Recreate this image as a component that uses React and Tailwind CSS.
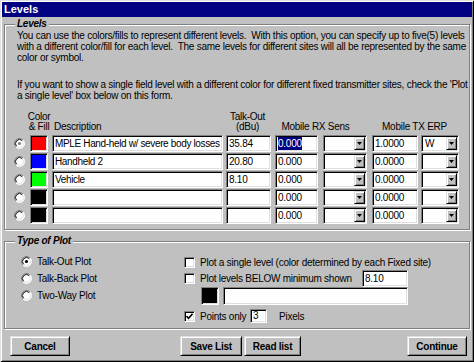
import React from "react"

const FONT = "font-['Liberation_Sans',Arial,sans-serif]"
const SUNK = "border border-t-[#808080] border-l-[#808080] border-r-white border-b-white shadow-[inset_1px_1px_0_#000,inset_-1px_-1px_0_#dfdfdf]"
const RAISED = "border border-t-[#dfdfdf] border-l-[#dfdfdf] border-r-black border-b-black shadow-[inset_1px_1px_0_#fff,inset_-1px_-1px_0_#808080]"

const rows = [
  { swatch: "bg-[#ff0000]", desc: "MPLE Hand-held w/ severe body losses", talk: "35.84", erp: "1.0000", unit: "W", on: true, sel: true },
  { swatch: "bg-[#0000ff]", desc: "Handheld 2", talk: "20.80", erp: "0.0000", unit: "" },
  { swatch: "bg-[#00ff00]", desc: "Vehicle", talk: "8.10", erp: "0.0000", unit: "" },
  { swatch: "bg-black", desc: "", talk: "", erp: "0.0000", unit: "" },
  { swatch: "bg-black", desc: "", talk: "", erp: "0.0000", unit: "" },
]

function Radio({ on, dim }) {
  return (
    <svg width="11" height="11" viewBox="0 0 11 11" className="shrink-0">
      <circle cx="5.5" cy="5.5" r="5" fill="#fff" />
      <path d="M1.96 9.04A5 5 0 0 1 9.04 1.96" stroke="#808080" fill="none" />
      <path d="M2.67 8.33A4 4 0 0 1 8.33 2.67" stroke="#000" fill="none" />
      <path d="M9.04 1.96A5 5 0 0 1 1.96 9.04" stroke="#fff" fill="none" />
      <path d="M8.33 2.67A4 4 0 0 1 2.67 8.33" stroke="#dfdfdf" fill="none" />
      {on && <circle cx="5.5" cy="5.5" r="1.6" fill={dim ? "#808080" : "#000"} />}
    </svg>
  )
}

function Check({ on }) {
  return (
    <div className={`${SUNK} bg-white w-[11px] h-[11px] shrink-0 flex items-center justify-center`}>
      {on && (
        <svg width="7" height="7" viewBox="0 0 7 7">
          <path d="M0.5 3L2.5 5.2L6.5 0.8" stroke="#000" strokeWidth="1.6" fill="none" />
        </svg>
      )}
    </div>
  )
}

function Field({ className, children }) {
  return (
    <div className={`${SUNK} bg-white h-[17px] pl-[2px] flex items-center overflow-hidden whitespace-nowrap ${className}`}>
      {children}
    </div>
  )
}

function Combo({ className, value }) {
  return (
    <div className={`${SUNK} bg-white h-[17px] flex p-[1px] ${className}`}>
      <div className="flex-1 pl-[2px] leading-[13px]">{value}</div>
      <div className={`${RAISED} bg-[#c0c0c0] w-[11px] flex items-center justify-center`}>
        <svg width="5" height="3" viewBox="0 0 5 3">
          <path d="M0 0h5L2.5 3z" fill="#000" />
        </svg>
      </div>
    </div>
  )
}

function Button({ className, children }) {
  return (
    <div className={`${RAISED} bg-[#c0c0c0] h-[20px] flex items-center justify-center font-bold text-[10px] ${className}`}>
      {children}
    </div>
  )
}

export default function App() {
  return (
    <div className={`${FONT} w-[474px] h-[362px] bg-[#c0c0c0] p-[2px] text-[10px] tracking-[-0.25px] text-black shadow-[inset_1px_1px_0_#dfdfdf,inset_-1px_-1px_0_#000,inset_2px_2px_0_#fff,inset_-2px_-2px_0_#808080] overflow-hidden`}>
      {/* title bar */}
      <div className="h-[15px] bg-[#000080] text-white font-bold text-[11px] tracking-normal leading-[15px] pl-[2px]">Levels</div>

      {/* Levels group */}
      <fieldset className="mx-[2px] mt-[1px] border border-[#808080] shadow-[1px_1px_0_#fff,inset_1px_1px_0_#fff] pb-[5px]">
        <legend className="ml-[10px] px-[2px] bg-[#c0c0c0] font-bold italic leading-[12px]">Levels</legend>
        <div className="pl-[12px] leading-[11px] whitespace-pre">
          <div>You can use the colors/fills to represent different levels.  With this option, you can specify up to five(5) levels</div>
          <div>with a different color/fill for each level.  The same levels for different sites will all be represented by the same</div>
          <div>color or symbol.</div>
          <div className="mt-[16px]">If you want to show a single field level with a different color for different fixed transmitter sites, check the 'Plot</div>
          <div>a single level' box below on this form.</div>
        </div>

        {/* grid header */}
        <div className="flex items-end pl-[9px] mt-[11px] leading-[10px]">
          <div className="w-[11px]" />
          <div className="ml-[2px] w-[24px] text-center">Color<br />&amp; Fill</div>
          <div className="w-[171px] pl-[3px]">Description</div>
          <div className="ml-[3px] w-[45px] text-center">Talk-Out<br />(dBu)</div>
          <div className="ml-[4px] w-[83px] text-center">Mobile RX Sens</div>
          <div className="ml-[14px] w-[87px] text-center">Mobile TX ERP</div>
        </div>

        {/* grid rows */}
        <div className="mt-[3px] pl-[9px] flex flex-col gap-[1px] leading-[13px]">
          {rows.map((r, i) => (
            <div key={i} className="flex items-center h-[17px]">
              <Radio on={r.on} dim />
              <div className={`${SUNK} ${r.swatch} ml-[5px] w-[18px] h-[17px]`} />
              <Field className="ml-[4px] w-[171px] tracking-[-0.35px]">{r.desc}</Field>
              <Field className="ml-[3px] w-[45px]">{r.talk}</Field>
              <Field className="ml-[4px] w-[43px]">
                {r.sel ? <span className="bg-[#000080] text-white">0.000</span> : "0.000"}
              </Field>
              <Combo className="ml-[5px] w-[44px]" value="" />
              <Field className="ml-[5px] w-[46px]">{r.erp}</Field>
              <Combo className="ml-[3px] w-[38px]" value={r.unit} />
            </div>
          ))}
        </div>
      </fieldset>

      {/* Type of Plot group */}
      <fieldset className="mx-[2px] mt-[5px] border border-[#808080] shadow-[1px_1px_0_#fff,inset_1px_1px_0_#fff] pb-[5px]">
        <legend className="ml-[10px] px-[2px] bg-[#c0c0c0] font-bold italic leading-[12px]">Type of Plot</legend>
        <div className="flex pt-[6px]">
          <div className="w-[179px] pl-[16px] flex flex-col">
            {["Talk-Out Plot", "Talk-Back Plot", "Two-Way Plot"].map((t, i) => (
              <div key={t} className="h-[17px] flex items-center gap-[5px]">
                <Radio on={i === 0} />
                <span>{t}</span>
              </div>
            ))}
          </div>
          <div className="flex flex-col pt-[1px]">
            <div className="h-[16px] flex items-center gap-[5px]">
              <Check />
              <span>Plot a single level (color determined by each Fixed site)</span>
            </div>
            <div className="h-[17px] flex items-center">
              <Check />
              <span className="ml-[5px] w-[162px]">Plot levels BELOW minimum shown</span>
              <Field className="w-[46px]">8.10</Field>
            </div>
            <div className="h-[18px] flex items-center pl-[17px]">
              <div className={`${SUNK} bg-black w-[18px] h-[18px]`} />
              <div className={`${SUNK} bg-white ml-[4px] w-[185px] h-[18px]`} />
            </div>
            <div className="mt-[4px] h-[14px] flex items-center">
              <Check on />
              <span className="ml-[5px] w-[50px]">Points only</span>
              <div className={`${SUNK} bg-white w-[17px] h-[14px] pl-[2px] leading-[12px]`}>3</div>
              <span className="ml-[12px]">Pixels</span>
            </div>
          </div>
        </div>
      </fieldset>

      {/* buttons */}
      <div className="flex mt-[7px]">
        <Button className="ml-[8px] w-[60px]">Cancel</Button>
        <Button className="ml-[110px] w-[62px]">Save List</Button>
        <Button className="ml-[2px] w-[57px]">Read list</Button>
        <Button className="ml-auto mr-[5px] w-[60px]">Continue</Button>
      </div>
    </div>
  )
}
